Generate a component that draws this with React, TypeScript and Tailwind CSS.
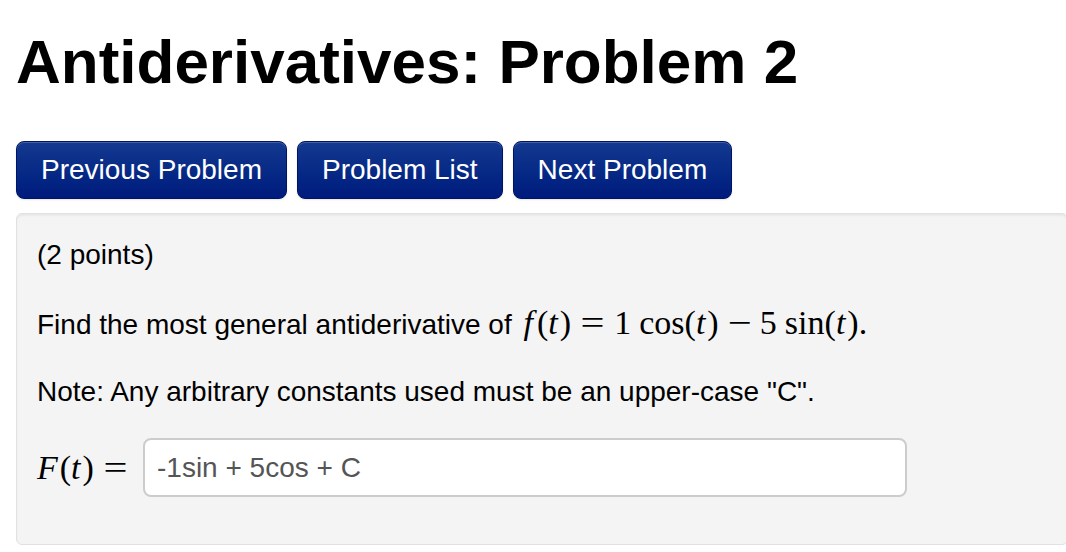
import React from 'react';

const sans = { fontFamily: '"Liberation Sans", Arial, Helvetica, sans-serif' };
const serif = { fontFamily: '"Liberation Serif", "Times New Roman", serif' };

const NavButton = ({ label }: { label: string }) => (
    <button
        type="button"
        className="h-[58px] px-[24px] rounded-[8px] border border-[#001466] bg-gradient-to-b from-[#14398f] to-[#001a7d] text-white text-[28px] leading-[40px] shadow-[inset_0_1px_0_rgba(255,255,255,0.2),0_1px_2px_rgba(0,0,0,0.1)]"
    >
        {label}
    </button>
);

// MathJax-ish italic variable with a little italic correction
const V = ({ c }: { c: string }) => <i className="pr-[2px]">{c}</i>;

export default function App() {
    return (
        <div className="w-[1066px] h-[552px] bg-white overflow-hidden pl-[16px] pt-[22px]" style={sans}>
            <h2 className="text-[62px] leading-[80px] font-bold text-black">Antiderivatives: Problem 2</h2>

            <div className="flex gap-[10px] mt-[39px]">
                <NavButton label="Previous Problem" />
                <NavButton label="Problem List" />
                <NavButton label="Next Problem" />
            </div>

            <div className="mt-[14px] w-[1052px] h-[332px] bg-[#f4f4f4] border border-[#e1e1e1] rounded-[6px] shadow-[inset_0_2px_2px_rgba(0,0,0,0.05)] pl-[20px] pt-[21px] text-[28px] leading-[40px] text-black">
                <p>(2 points)</p>
                <p className="mt-[28px]">
                    Find the most general antiderivative of{' '}
                    <span className="text-[34px] ml-[4px]" style={serif}>
                        <i className="pr-[4px]">f</i>(<V c="t" />)<span className="inline-block scale-x-125 mx-[12px]">=</span>1
                        <span className="ml-[8px]">cos</span>(<V c="t" />)
                        <span className="inline-block scale-x-125 mx-[11px]">−</span>5<span className="ml-[8px]">sin</span>(<V c="t" />).
                    </span>
                </p>
                <p className="mt-[27px]">Note: Any arbitrary constants used must be an upper-case "C".</p>
                <div className="mt-[26px] flex items-center">
                    <span className="text-[34px] leading-[40px] w-[106px]" style={serif}>
                        <V c="F" />(<V c="t" />)<span className="inline-block scale-x-125 ml-[12px]">=</span>
                    </span>
                    <div className="w-[764px] h-[59px] bg-white border-2 border-[#cccccc] rounded-[8px] flex items-center px-[12px] text-[#555555] text-[28px]">
                        -1sin + 5cos + C
                    </div>
                </div>
            </div>
        </div>
    );
}
